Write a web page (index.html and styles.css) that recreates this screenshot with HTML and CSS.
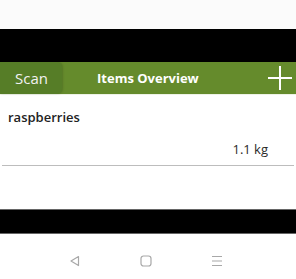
FILE: index.html
```html
<!DOCTYPE html>
<html>
<head>
<meta charset="utf-8">
<link rel="stylesheet" href="styles.css">
</head>
<body>
<div class="screen">
  <div class="status"></div>
  <div class="black-top"></div>
  <div class="appbar">
    <div class="scan">Scan</div>
    <div class="title">Items Overview</div>
    <div class="add">
      <svg width="26" height="26" viewBox="0 0 26 26"><path d="M13 1V25M1 13H25" stroke="#fff" stroke-width="2" fill="none"/></svg>
    </div>
  </div>
  <div class="content">
    <div class="item">
      <div class="name">raspberries</div>
      <div class="qty">1.1 kg</div>
    </div>
  </div>
  <div class="black-bottom"></div>
  <div class="nav">
    <svg class="nav-icon" width="14" height="14" viewBox="0 0 14 14"><path d="M10.5 2.5L3 7L10.5 11.5Z" stroke="#a8a8a8" stroke-width="1.2" fill="none" stroke-linejoin="round"/></svg>
    <svg class="nav-icon" width="14" height="14" viewBox="0 0 14 14"><rect x="2" y="2" width="10" height="10" rx="2.5" stroke="#a8a8a8" stroke-width="1.2" fill="none"/></svg>
    <svg class="nav-icon" width="14" height="14" viewBox="0 0 14 14"><path d="M2 2.5H12M2 7H12M2 11.5H12" stroke="#a8a8a8" stroke-width="1.2" fill="none"/></svg>
  </div>
</div>
</body>
</html>
```
FILE: styles.css
```css
* { box-sizing: border-box; }
html, body { margin: 0; padding: 0; }
body { width: 296px; height: 279px; overflow: hidden; background: #fff; font-family: "Open Sans", "Noto Sans", sans-serif; }
.screen { display: flex; flex-direction: column; height: 279px; }
.status { height: 29px; background: #fbfbfb; }
.black-top { height: 33px; background: #000; }
.appbar { height: 32px; background: #658b2c; display: flex; align-items: center; position: relative; }
.scan { width: 62px; height: 32px; background: #567d27; border-radius: 0 5px 5px 0; color: #f2f2f2; font-size: 15px; display: flex; align-items: center; padding-left: 15px; box-shadow: 1px 0 2px rgba(0,0,0,0.15); }
.title { color: #fff; font-weight: 700; font-size: 13px; margin-left: 35px; flex: 1; }
.add { width: 26px; height: 26px; margin-right: 3px; display: flex; }
.content { height: 115px; background: #fff; padding: 0 2px; border-top: 1px solid #eef3e6; }
.item { border-bottom: 1.5px solid #bdbdbd; height: 71px; display: flex; flex-direction: column; }
.name { font-size: 13px; font-weight: 600; color: #222; padding: 13px 0 0 6px; }
.qty { font-size: 13px; color: #2a2a2a; text-align: right; padding: 14px 26px 0 0; }
.black-bottom { height: 25px; background: #000; border-top: 1px solid #666; border-bottom: 1px solid #666; }
.nav { flex: 1; display: flex; align-items: center; background: #fff; padding-left: 68px; gap: 57px; padding-top: 9px; }
.nav-icon { display: block; }
```
